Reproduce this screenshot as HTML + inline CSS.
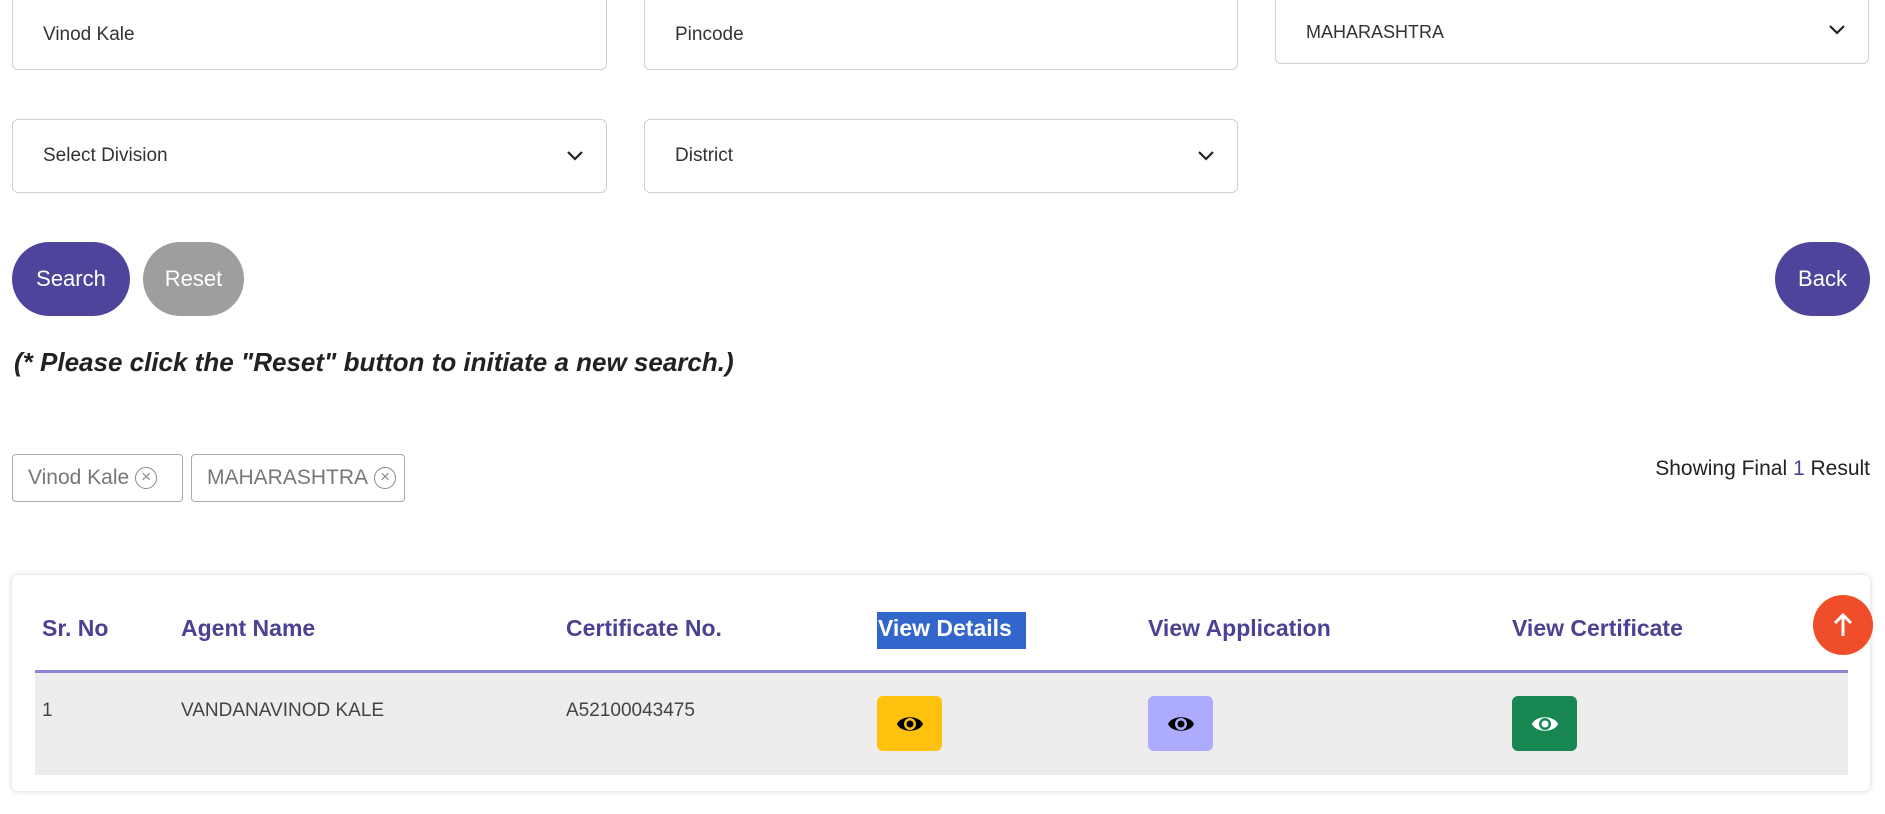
<!DOCTYPE html>
<html><head><meta charset="utf-8"><style>
*{box-sizing:border-box;margin:0;padding:0}
body{width:1885px;height:814px;overflow:hidden;background:#fff;font-family:"Liberation Sans",sans-serif;color:#222;position:relative}
.box{position:absolute;border:1px solid #d0d0d0;border-radius:6px;background:#fff;font-size:19px;color:#333;padding-left:30px;display:flex;align-items:center}
.chev{position:absolute;right:22px;top:50%;margin-top:-8px}
.btn{position:absolute;border-radius:37px;color:#fff;font-size:22px;display:flex;align-items:center;justify-content:center}
.chip{position:absolute;border:1px solid #aaa;border-radius:4px;font-size:21px;color:#777;display:flex;align-items:center;padding-left:15px;white-space:nowrap}
.x{display:inline-block;width:22px;height:22px;border:1.5px solid #888;border-radius:50%;margin-left:6px;font-size:17px;line-height:18px;text-align:center;color:#888}
.card{position:absolute;left:12px;top:575px;width:1858px;height:216px;border-radius:6px;box-shadow:0 0 6px rgba(0,0,0,.18);background:#fff}
.th{position:absolute;top:615px;font-size:23px;font-weight:bold;color:#4b4294}
.td{position:absolute;top:700px;font-size:19px;color:#444}
.eye{position:absolute;top:696px;width:65px;height:55px;border-radius:6px;display:flex;align-items:center;justify-content:center}
</style></head><body>
<div class="box" style="left:12px;top:-10px;width:595px;height:80px;padding-top:10px">Vinod Kale</div>
<div class="box" style="left:644px;top:-10px;width:594px;height:80px;padding-top:10px">Pincode</div>
<div class="box" style="left:1275px;top:-10px;width:594px;height:74px;padding-top:10px;font-size:18px">MAHARASHTRA<svg class="chev" style="margin-top:-3px" width="18" height="12" viewBox="0 0 18 12"><path d="M2 2l7 7 7-7" fill="none" stroke="#222" stroke-width="2.2"/></svg></div>
<div class="box" style="left:12px;top:119px;width:595px;height:74px">Select Division<svg class="chev" width="18" height="12" viewBox="0 0 18 12" style="margin-top:-6px"><path d="M2 2l7 7 7-7" fill="none" stroke="#222" stroke-width="2.2"/></svg></div>
<div class="box" style="left:644px;top:119px;width:594px;height:74px">District<svg class="chev" width="18" height="12" viewBox="0 0 18 12" style="margin-top:-6px"><path d="M2 2l7 7 7-7" fill="none" stroke="#222" stroke-width="2.2"/></svg></div>
<div class="btn" style="left:12px;top:242px;width:118px;height:74px;background:#4e449b">Search</div>
<div class="btn" style="left:143px;top:242px;width:101px;height:74px;background:#9e9e9e">Reset</div>
<div class="btn" style="left:1775px;top:242px;width:95px;height:74px;background:#4e449b">Back</div>
<div style="position:absolute;left:14px;top:347px;font-size:26px;font-weight:bold;font-style:italic;color:#222">(* Please click the "Reset" button to initiate a new search.)</div>
<div class="chip" style="left:12px;top:454px;width:171px;height:48px">Vinod Kale<span class="x">×</span></div>
<div class="chip" style="left:191px;top:454px;width:214px;height:48px">MAHARASHTRA<span class="x">×</span></div>
<div style="position:absolute;right:15px;top:457px;font-size:21px;color:#222">Showing Final <span style="color:#4b4294">1</span> Result</div>
<div class="card"></div>
<div style="position:absolute;left:35px;top:670px;width:1813px;height:3px;background:#8b87d6"></div>
<div style="position:absolute;left:35px;top:673px;width:1813px;height:102px;background:#eeeced"></div>
<div class="th" style="left:42px">Sr. No</div>
<div class="th" style="left:181px">Agent Name</div>
<div class="th" style="left:566px">Certificate No.</div>
<div class="th" style="left:877px;top:612px;background:#3366cc;color:#fff;padding:3px 1px;height:37px;width:149px">View Details</div>
<div class="th" style="left:1148px">View Application</div>
<div class="th" style="left:1512px">View Certificate</div>
<div class="td" style="left:42px">1</div>
<div class="td" style="left:181px">VANDANAVINOD KALE</div>
<div class="td" style="left:566px">A52100043475</div>
<div class="eye" style="left:877px;background:#fdc10e"><svg width="28" height="22" viewBox="0 0 28 22"><path d="M1 11C5 2 23 2 27 11C23 20 5 20 1 11Z" fill="#000"/><circle cx="14" cy="11" r="6" fill="#fdc10e"/><circle cx="14" cy="11" r="3.5" fill="#000"/></svg></div>
<div class="eye" style="left:1148px;background:#adabfd"><svg width="28" height="22" viewBox="0 0 28 22"><path d="M1 11C5 2 23 2 27 11C23 20 5 20 1 11Z" fill="#000"/><circle cx="14" cy="11" r="6" fill="#adabfd"/><circle cx="14" cy="11" r="3.5" fill="#000"/></svg></div>
<div class="eye" style="left:1512px;background:#198754"><svg width="28" height="22" viewBox="0 0 28 22"><path d="M1 11C5 2 23 2 27 11C23 20 5 20 1 11Z" fill="#fff"/><circle cx="14" cy="11" r="6" fill="#198754"/><circle cx="14" cy="11" r="3.5" fill="#fff"/></svg></div>
<div style="position:absolute;left:1813px;top:595px;width:60px;height:60px;border-radius:50%;background:#f04e2a;display:flex;align-items:center;justify-content:center"><svg width="22" height="26" viewBox="0 0 22 26"><path d="M11 24V3M3 11l8-8 8 8" fill="none" stroke="#fff" stroke-width="3"/></svg></div>
</body></html>
